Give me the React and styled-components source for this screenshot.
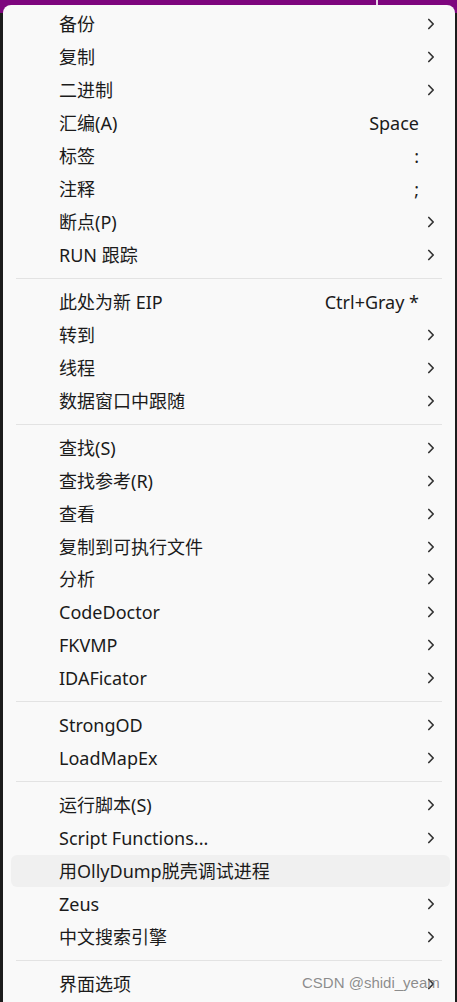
import React from "react";
import styled, { createGlobalStyle } from "styled-components";

const GlobalStyle = createGlobalStyle`
  html, body {
    margin: 0;
    padding: 0;
    background: #1c1c1c;
  }
  body {
    font-family: "Noto Sans", "Noto Sans CJK SC", sans-serif;
  }
`;

const Page = styled.div`
  position: relative;
  width: 457px;
  height: 1002px;
  overflow: hidden;
  display: flex;
  flex-direction: column;
`;

const TopBar = styled.div`
  height: 5px;
  flex-shrink: 0;
  background: linear-gradient(
    to right,
    #7e067e 0,
    #7e067e 376px,
    #e8d8e8 376px,
    #e8d8e8 378px,
    #7e067e 378px
  );
`;

const Stage = styled.div`
  flex: 1;
  display: flex;
  padding-left: 3px;
  padding-right: 2px;
  background: linear-gradient(to bottom, #7e067e 0, #7e067e 8px, #1c1c1c 8px);
`;

const Menu = styled.div`
  flex: 1;
  background: #f9f9f9;
  border-radius: 8px 8px 0 0;
  padding: 3px 0 0;
  display: flex;
  flex-direction: column;
`;

const Item = styled.div`
  height: 32.95px;
  flex-shrink: 0;
  margin: 0 5px 0 8px;
  padding-left: 48px;
  display: grid;
  grid-template-columns: 1fr auto 31px;
  align-items: center;
  border-radius: 6px;
  background: ${(p) => (p.$active ? "#f0f0f0" : "transparent")};
  color: #1b1b1b;
  font-size: 18px;
  line-height: 1;
`;

const Label = styled.span`
  white-space: nowrap;
`;

const Shortcut = styled.span`
  white-space: nowrap;
  text-align: right;
`;

const ArrowCell = styled.span`
  display: flex;
  align-items: center;
  padding-left: 8px;
`;

const Separator = styled.div`
  height: 14px;
  flex-shrink: 0;
  display: flex;
  align-items: center;
  padding: 0 13px;

  &::before {
    content: "";
    flex: 1;
    height: 1px;
    background: #e3e3e3;
  }
`;

const Watermark = styled.div`
  position: absolute;
  left: 302px;
  top: 974px;
  font-family: "Liberation Sans", Arial, sans-serif;
  font-size: 15px;
  color: rgba(120, 120, 120, 0.85);
  white-space: nowrap;
`;

const Chevron = () => (
  <svg width="8" height="12" viewBox="0 0 8 12">
    <path
      d="M1.8 1.5 L6.2 6 L1.8 10.5"
      fill="none"
      stroke="#333"
      strokeWidth="1.7"
      strokeLinecap="round"
      strokeLinejoin="round"
    />
  </svg>
);

const groups = [
  [
    { label: "备份", sub: true },
    { label: "复制", sub: true },
    { label: "二进制", sub: true },
    { label: "汇编(A)", key: "Space" },
    { label: "标签", key: ":" },
    { label: "注释", key: ";" },
    { label: "断点(P)", sub: true },
    { label: "RUN 跟踪", sub: true },
  ],
  [
    { label: "此处为新 EIP", key: "Ctrl+Gray *" },
    { label: "转到", sub: true },
    { label: "线程", sub: true },
    { label: "数据窗口中跟随", sub: true },
  ],
  [
    { label: "查找(S)", sub: true },
    { label: "查找参考(R)", sub: true },
    { label: "查看", sub: true },
    { label: "复制到可执行文件", sub: true },
    { label: "分析", sub: true },
    { label: "CodeDoctor", sub: true },
    { label: "FKVMP", sub: true },
    { label: "IDAFicator", sub: true },
  ],
  [
    { label: "StrongOD", sub: true },
    { label: "LoadMapEx", sub: true },
  ],
  [
    { label: "运行脚本(S)", sub: true },
    { label: "Script Functions...", sub: true },
    { label: "用OllyDump脱壳调试进程", active: true },
    { label: "Zeus", sub: true },
    { label: "中文搜索引擎", sub: true },
  ],
  [{ label: "界面选项", sub: true }],
];

const App = () => {
  return (
    <Page>
      <GlobalStyle />
      <TopBar />
      <Stage>
        <Menu>
          {groups.map((group, gi) => (
            <React.Fragment key={gi}>
              {gi > 0 && <Separator />}
              {group.map((item) => (
                <Item key={item.label} $active={item.active}>
                  <Label>{item.label}</Label>
                  <Shortcut>{item.key || ""}</Shortcut>
                  <ArrowCell>{item.sub && <Chevron />}</ArrowCell>
                </Item>
              ))}
            </React.Fragment>
          ))}
        </Menu>
      </Stage>
      <Watermark>CSDN @shidi_yeam</Watermark>
    </Page>
  );
};

export default App;
